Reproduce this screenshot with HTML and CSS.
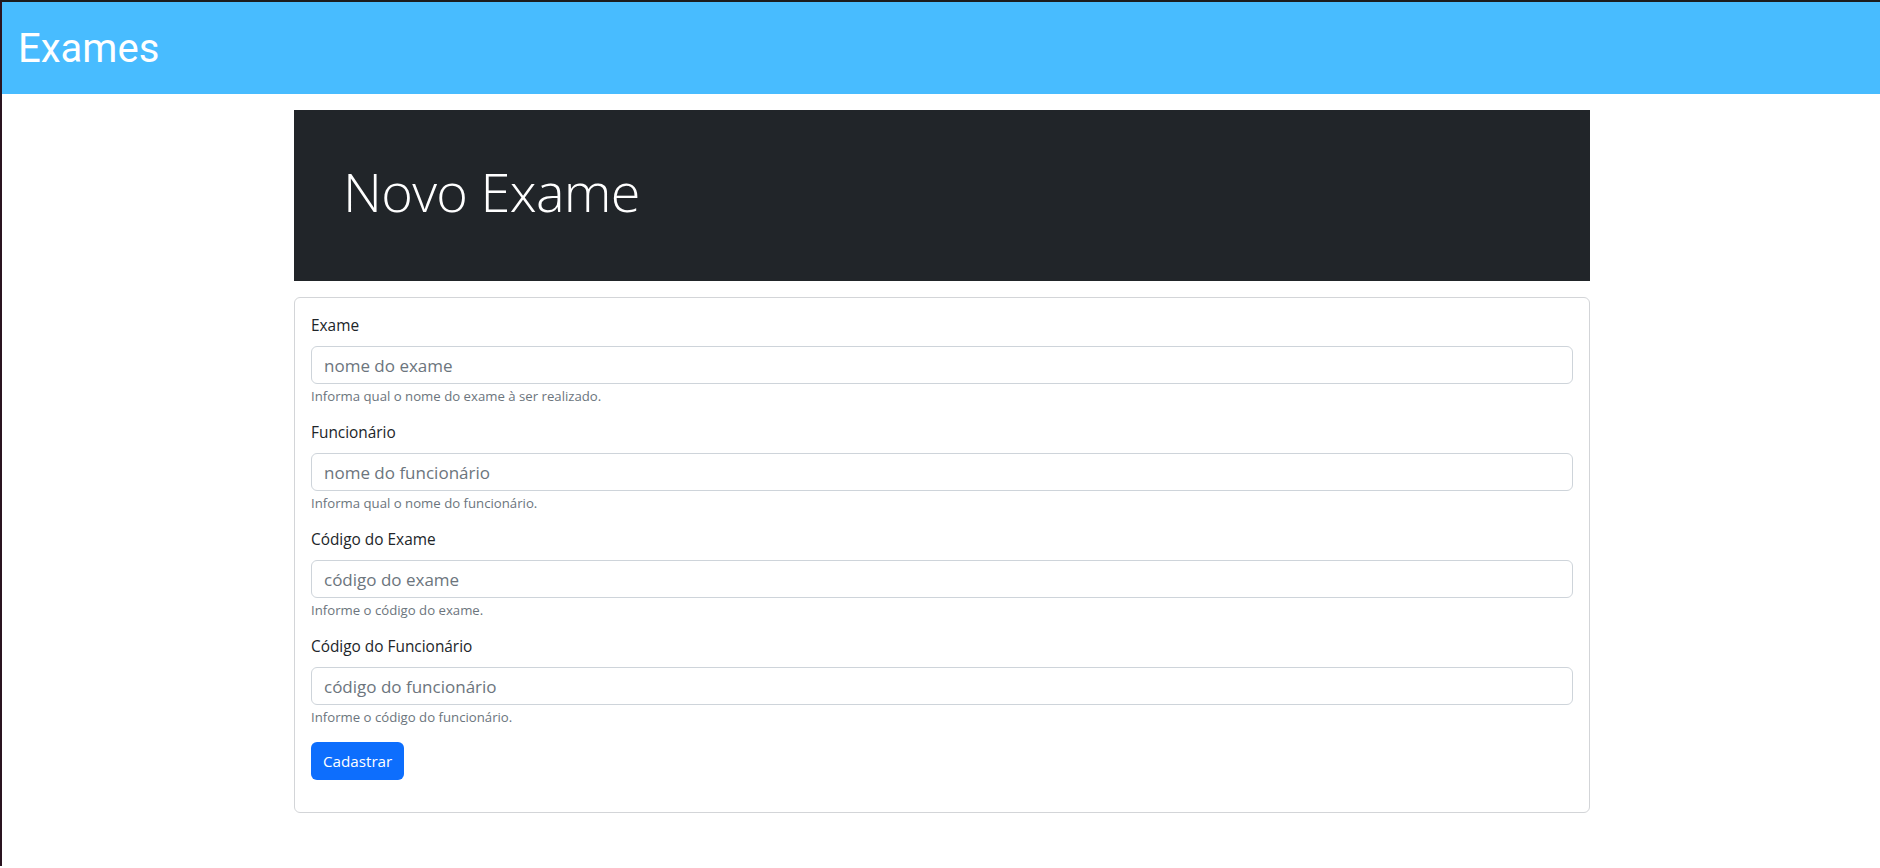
FILE: index.html
```html
<!DOCTYPE html>
<html lang="pt-BR">
<head>
  <meta charset="UTF-8">
  <meta name="viewport" content="width=device-width, initial-scale=1.0">
  <title>Exames</title>
  <link rel="stylesheet" href="styles.css">
</head>
<body>
  <nav class="navbar">
    <span class="brand">Exames</span>
  </nav>

  <div class="container">
    <div class="jumbotron">
      <h1>Novo Exame</h1>
    </div>

    <div class="card">
      <form class="card-body">
        <div class="field">
          <label for="exame">Exame</label>
          <input type="text" id="exame" placeholder="nome do exame">
          <div class="help">Informa qual o nome do exame à ser realizado.</div>
        </div>
        <div class="field">
          <label for="funcionario">Funcionário</label>
          <input type="text" id="funcionario" placeholder="nome do funcionário">
          <div class="help">Informa qual o nome do funcionário.</div>
        </div>
        <div class="field">
          <label for="codExame">Código do Exame</label>
          <input type="text" id="codExame" placeholder="código do exame">
          <div class="help">Informe o código do exame.</div>
        </div>
        <div class="field">
          <label for="codFunc">Código do Funcionário</label>
          <input type="text" id="codFunc" placeholder="código do funcionário">
          <div class="help">Informe o código do funcionário.</div>
        </div>
        <div class="field">
          <button type="submit" class="btn">Cadastrar</button>
        </div>
      </form>
    </div>
  </div>
</body>
</html>
```

FILE: styles.css
```css
body {
  margin: 0;
  padding: 0;
  font-family: "Open Sans", "Noto Sans", sans-serif;
  color: #212529;
  background-color: #fff;
  border-top: 2px solid #1c1c1e;
  border-left: 2px solid #2a1420;
  min-height: 866px;
  box-sizing: border-box;
}
.navbar {
  background-color: #48bcff;
  height: 92px;
  display: flex;
  align-items: center;
  padding-left: 16px;
}
.brand {
  font-family: Roboto, sans-serif;
  font-size: 40px;
  color: #fff;
}
.container {
  width: 1296px;
  margin: 16px auto 0;
  position: relative;
  left: 1px;
}
.jumbotron {
  background-color: #212529;
  padding: 48px 48px 48px 49px;
}
.jumbotron h1 {
  margin: 0 0 8px;
  font-size: 54px;
  font-weight: 300;
  letter-spacing: -0.7px;
  line-height: 67px;
  color: #fff;
}
.card {
  margin-top: 16px;
  border: 1px solid #d3d5d8;
  border-radius: 6px;
}
.card-body {
  padding: 16px;
}
.field {
  margin-bottom: 16px;
}
.field label {
  display: block;
  font-size: 15.4px;
  line-height: 24px;
  margin-bottom: 8px;
}
.field input {
  display: block;
  width: 100%;
  box-sizing: border-box;
  height: 38px;
  padding: 6px 12px;
  font-family: inherit;
  font-size: 17px;
  color: #212529;
  border: 1px solid #ced4da;
  border-radius: 6px;
  outline: none;
}
.field input::placeholder {
  color: #6c757d;
}
.help {
  margin-top: 4px;
  font-size: 13.2px;
  line-height: 17px;
  color: #6c757d;
}
.btn {
  height: 38px;
  padding: 0 12px;
  font-family: inherit;
  font-size: 15.2px;
  color: #fff;
  background-color: #0d6efd;
  border: none;
  border-radius: 6px;
  cursor: pointer;
}
```
